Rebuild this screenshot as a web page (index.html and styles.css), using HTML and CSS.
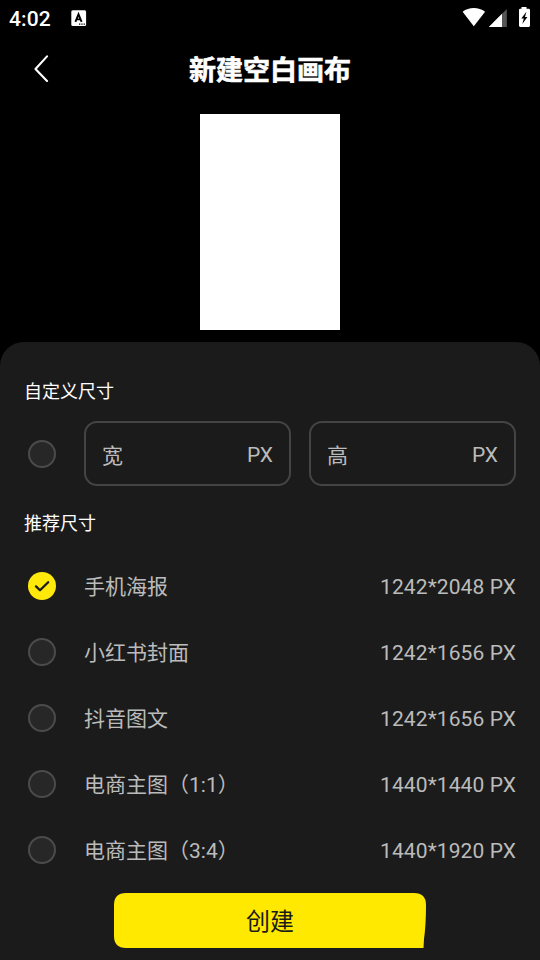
FILE: index.html
```
<!DOCTYPE html>
<html lang="zh-CN">
<head>
<meta charset="utf-8">
<title>新建空白画布</title>
<link rel="stylesheet" href="styles.css">
</head>
<body>
<header class="status">
  <span class="time">4:02</span>
  <svg class="app-icon" width="16" height="17" viewBox="0 0 16 17"><rect x="0.3" y="0.3" width="14.8" height="15.6" rx="1.5" fill="#fff"/><path d="M4.4 11.8 7.5 4.3 10.6 11.8M5.4 9.4H9.6" fill="none" stroke="#000" stroke-width="1.9"/><path d="M8 13.6h1.3v1.2H8zM10.3 13.6h1.3v1.2h-1.3zM12.6 13.6h1.3v1.2h-1.3z"/></svg>
  <svg class="system-icons" width="70" height="38" viewBox="0 0 70 38"><path d="M2.6 11.7Q7.5 8 13.8 8T25.1 11.7L13.8 26.3Z" fill="#fff"/><path d="M46.8 9V26.9H28.8Z" fill="#555"/><path d="M42 13.8V26.9H28.8Z" fill="#fff"/><path d="M61.5 7h5v1.8h2.2q1.3 0 1.3 1.3v15.5q0 1.3-1.3 1.3h-8.4q-1.3 0-1.3-1.3V10.1q0-1.3 1.3-1.3h1.2z" fill="#fff"/><path d="M66.4 11.8 61.3 18.6h2.5l-1.5 5.5 5.1-7.2H65z"/></svg>
</header>
<nav class="nav">
  <svg class="back" width="16" height="28" viewBox="0 0 16 28"><path d="M14 1.4 2.5 14 14 26" fill="none" stroke="#fff" stroke-width="2.1" stroke-linecap="round" stroke-linejoin="round"/></svg>
  <h1>新建空白画布</h1>
</nav>
<div class="preview"></div>
<main class="panel">
  <h2>自定义尺寸</h2>
  <div class="custom">
    <span class="radio"></span>
    <div class="field"><span class="hint">宽</span><span>PX</span></div>
    <div class="field"><span class="hint">高</span><span>PX</span></div>
  </div>
  <h2 class="recommended">推荐尺寸</h2>
  <ul>
    <li><span class="radio checked"><svg width="28" height="28" viewBox="0 0 28 28"><path d="M8 14.4 12 18.3 20.2 10.2" fill="none" stroke="#1b1b1b" stroke-width="2.3" stroke-linecap="round" stroke-linejoin="round"/></svg></span><span class="name">手机海报</span><span class="size">1242*2048 PX</span></li>
    <li><span class="radio"></span><span class="name">小红书封面</span><span class="size">1242*1656 PX</span></li>
    <li><span class="radio"></span><span class="name">抖音图文</span><span class="size">1242*1656 PX</span></li>
    <li><span class="radio"></span><span class="name">电商主图（1:1）</span><span class="size">1440*1440 PX</span></li>
    <li><span class="radio"></span><span class="name">电商主图（3:4）</span><span class="size">1440*1920 PX</span></li>
  </ul>
  <button class="create">创建</button>
</main>
</body>
</html>
```

FILE: styles.css
```
* { box-sizing: border-box; margin: 0; padding: 0; }
body {
  width: 540px;
  height: 960px;
  overflow: hidden;
  display: flex;
  flex-direction: column;
  background: #000;
  color: #fff;
  font-family: Roboto, "Noto Sans CJK SC", sans-serif;
}
.status { height: 38px; display: flex; align-items: center; padding-left: 9px; }
.time { font-size: 21px; font-weight: 500; line-height: 24px; width: 62px; letter-spacing: 0.1px; }
.app-icon { margin-top: -1px; }
.system-icons { margin-left: auto; margin-right: 10px; }
.nav { height: 62px; display: flex; align-items: center; padding-left: 33px; }
.nav h1 {
  flex: 1;
  margin-right: 49px;
  padding-top: 3px;
  text-align: center;
  font-size: 27px;
  line-height: 40px;
  font-weight: 700;
  -webkit-text-stroke: 0.6px #fff;
}
.preview { width: 140px; height: 216px; margin: 14px auto 12px; background: #fff; flex: none; }
.panel {
  flex: 1;
  background: #1b1b1b;
  border-radius: 24px 24px 0 0;
  padding: 37px 24px 0;
  display: flex;
  flex-direction: column;
}
h2 { font-size: 18px; line-height: 26px; font-weight: 400; }
.custom { display: flex; align-items: center; gap: 18px; margin-top: 16px; height: 65px; color: #bbb; }
.radio {
  flex: none;
  width: 28px;
  height: 28px;
  margin-left: 4px;
  border: 2px solid #4b4b4b;
  border-radius: 50%;
  background: #272727;
}
.custom .radio { margin-right: 10px; }
.checked { border: 0; background: #ffe90a; }
.checked svg { display: block; }
.field {
  width: 207px;
  height: 65px;
  border: 2px solid #444;
  border-radius: 13px;
  padding: 2px 16px 0;
  display: flex;
  align-items: center;
  justify-content: space-between;
  font-size: 21px;
}
.hint { padding-bottom: 2px; }
.recommended { margin-top: 25px; }
ul { list-style: none; margin-top: 16px; }
li { height: 66px; display: flex; align-items: center; font-size: 21px; line-height: 30px; color: #bbb; }
.name { flex: 1; margin-left: 28px; padding-top: 2px; }
.size { padding-top: 2px; letter-spacing: 0.1px; }
.create {
  flex: none;
  width: 312px;
  height: 55px;
  margin: 10px auto 0;
  padding-top: 3px;
  border: 0;
  background: #ffe900;
  clip-path: path("M12 0H300Q312 0 312 12Q312 32 310 46L309.5 55H12Q0 55 0 43V12Q0 0 12 0Z");
  color: #1b1b1b;
  font: 24px/52px Roboto, "Noto Sans CJK SC", sans-serif;
}
```
